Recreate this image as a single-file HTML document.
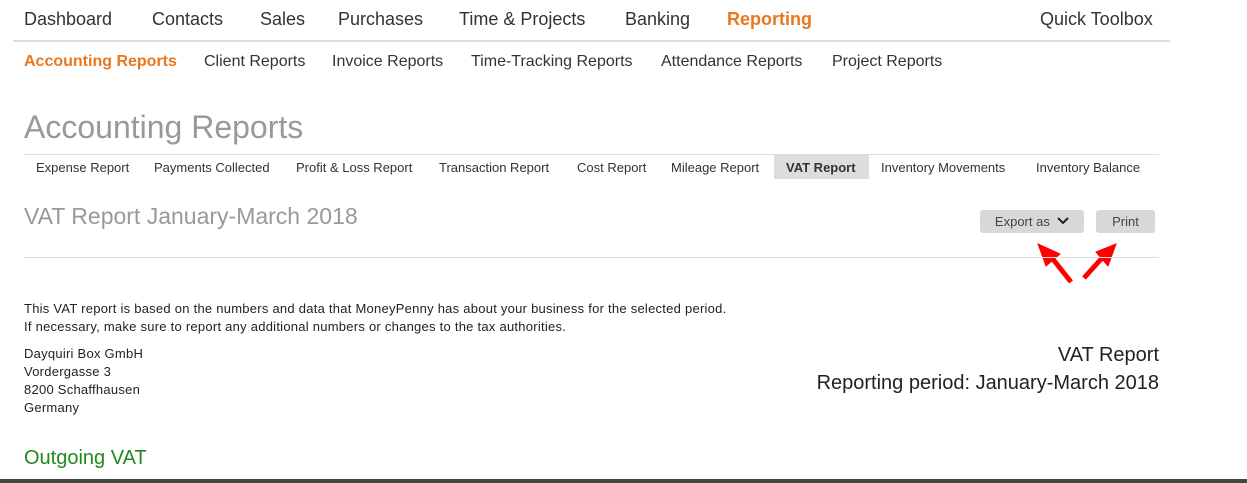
<!DOCTYPE html><html><head><style>
body{margin:0;width:1247px;height:483px;background:#fff;font-family:"Liberation Sans",sans-serif;position:relative;overflow:hidden;color:#222}
.a{position:absolute;white-space:nowrap}
.top span{position:absolute;top:9px;font-size:18px;color:#333}
.sub span{position:absolute;top:53px;font-size:16px;color:#333}
.tab span{position:absolute;top:160px;font-size:13px;color:#333}
.btn{position:absolute;background:#d8d8d8;border-radius:3px;font-size:13px;color:#444;text-align:center;line-height:23px;height:23px}
.s{font-size:13px;line-height:18px;letter-spacing:0.25px}
</style></head><body>
<div class="top">
<span style="left:24px">Dashboard</span><span style="left:152px">Contacts</span><span style="left:260px">Sales</span><span style="left:338px">Purchases</span><span style="left:459px">Time &amp; Projects</span><span style="left:625px">Banking</span><span style="left:727px;color:#e8771e;font-weight:bold">Reporting</span><span style="left:1040px">Quick Toolbox</span>
</div>
<div class="a" style="left:13px;top:40px;width:1157px;height:2px;background:#ddd"></div>
<div class="sub">
<span style="left:24px;color:#e8771e;font-weight:bold">Accounting Reports</span><span style="left:204px">Client Reports</span><span style="left:332px">Invoice Reports</span><span style="left:471px">Time-Tracking Reports</span><span style="left:661px">Attendance Reports</span><span style="left:832px">Project Reports</span>
</div>
<div class="a" style="left:24px;top:109px;font-size:32px;color:#999">Accounting Reports</div>
<div class="a" style="left:24px;top:154px;width:1135px;height:1px;background:#ddd"></div>
<div class="a" style="left:774px;top:155px;width:95px;height:24px;background:#ddd"></div>
<div class="tab">
<span style="left:36px">Expense Report</span><span style="left:154px">Payments Collected</span><span style="left:296px">Profit &amp; Loss Report</span><span style="left:439px">Transaction Report</span><span style="left:577px">Cost Report</span><span style="left:671px">Mileage Report</span><span style="left:786px;font-weight:bold">VAT Report</span><span style="left:881px">Inventory Movements</span><span style="left:1036px">Inventory Balance</span>
</div>
<div class="a" style="left:24px;top:203px;font-size:23px;color:#999">VAT Report January-March 2018</div>
<div class="btn" style="left:980px;top:210px;width:104px">Export as &nbsp;<svg width="12" height="8" viewBox="0 0 12 8" style="vertical-align:1px"><path d="M1 1l5 5 5-5" stroke="#222" stroke-width="2" fill="none"/></svg></div>
<div class="btn" style="left:1096px;top:210px;width:59px">Print</div>
<svg class="a" style="left:1030px;top:240px" width="90" height="50"><g fill="red" stroke="red"><path d="M41 42L22 18" stroke-width="5"/><polygon points="8,4 30,14 16,26"/><path d="M54 38L72 18" stroke-width="5"/><polygon points="86,4 66,12 78,26"/></g></svg>
<div class="a" style="left:24px;top:257px;width:1135px;height:1px;background:#ddd"></div>
<div class="a s" style="left:24px;top:300px">This VAT report is based on the numbers and data that MoneyPenny has about your business for the selected period.<br>If necessary, make sure to report any additional numbers or changes to the tax authorities.</div>
<div class="a s" style="left:24px;top:345px">Dayquiri Box GmbH<br>Vordergasse 3<br>8200 Schaffhausen<br>Germany</div>
<div class="a" style="right:88px;top:341px;font-size:20px;text-align:right;line-height:28px">VAT Report<br>Reporting period: January-March 2018</div>
<div class="a" style="left:24px;top:447px;font-size:20px;color:#1e8a1e">Outgoing VAT</div>
<div class="a" style="left:0;top:479px;width:1247px;height:4px;background:#444"></div>
</body></html>
